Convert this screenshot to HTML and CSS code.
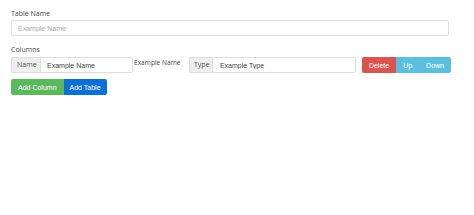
FILE: index.html
```html
<!DOCTYPE html>
<html lang="en">
<head>
    <meta charset="UTF-8">
    <meta name="viewport" content="width=device-width, initial-scale=1.0">
    <title>Table Builder</title>
    <link rel="stylesheet" href="styles.css">
</head>
<body>
    <div class="container">
        <label class="label">Table Name</label>
        <input type="text" class="field full" placeholder="Example Name">

        <label class="label columns-label">Columns</label>
        <div class="column-row">
            <div class="input-group name-group">
                <span class="addon">Name</span>
                <input type="text" class="field" value="Example Name">
            </div>
            <span class="preview">Example Name</span>
            <div class="input-group type-group">
                <span class="addon">Type</span>
                <input type="text" class="field" value="Example Type">
            </div>
            <div class="btn-group">
                <button class="btn delete">Delete</button>
                <button class="btn move">Up</button>
                <button class="btn move">Down</button>
            </div>
        </div>

        <div class="btn-group actions">
            <button class="btn add-column">Add Column</button>
            <button class="btn add-table">Add Table</button>
        </div>
    </div>
</body>
</html>
```

FILE: styles.css
```css
body {
    margin: 0;
    background: #fff;
    font-family: "Liberation Sans", Arial, sans-serif;
    font-size: 7px;
    color: #555;
}
.container {
    padding: 8px 23px 0 11px;
    width: 440px;
}
.label {
    display: block;
    font-family: "Open Sans", sans-serif;
    font-size: 7px;
    color: #444;
    height: 11px;
    line-height: 11px;
}
.columns-label {
    margin-top: 8px;
}
.field {
    box-sizing: border-box;
    height: 16px;
    border: 1px solid #ddd;
    border-radius: 2px;
    padding: 0 6px;
    font-family: "Liberation Sans", Arial, sans-serif;
    font-size: 7px;
    color: #444;
    outline: none;
}
.field::placeholder {
    color: #aaa;
}
.full {
    display: block;
    width: 438px;
    margin-top: 1px;
}
.column-row {
    display: flex;
    align-items: flex-start;
    margin-top: 2px;
}
.input-group {
    display: flex;
}
.addon {
    box-sizing: border-box;
    height: 16px;
    line-height: 14px;
    padding: 0 5px;
    background: #eee;
    border: 1px solid #ddd;
    border-right: none;
    border-radius: 2px 0 0 2px;
    color: #555;
    font-family: "Open Sans", sans-serif;
    font-size: 7px;
}
.input-group .field {
    border-radius: 0 2px 2px 0;
}
.name-group .addon {
    width: 29px;
}
.name-group .field {
    width: 93px;
}
.preview {
    font-family: "Open Sans", sans-serif;
    font-size: 6.6px;
    color: #444;
    margin-left: 1px;
    margin-top: 1px;
    width: 56px;
}
.type-group .addon {
    width: 23px;
    padding: 0 4px;
}
.type-group .field {
    width: 144px;
    padding: 0 7px;
}
.btn-group {
    display: flex;
    margin-left: 6px;
}
.btn {
    height: 16px;
    padding: 0 7px;
    border: none;
    color: #fff;
    font-family: "Liberation Sans", Arial, sans-serif;
    font-size: 7px;
    cursor: pointer;
}
.btn-group .btn:first-child {
    border-radius: 2px 0 0 2px;
}
.btn-group .btn:last-child {
    border-radius: 0 2px 2px 0;
}
.delete {
    background: #d9534f;
}
.move {
    background: #5bc0de;
}
.actions {
    margin: 6px 0 0 0;
}
.add-column {
    background: #5cb85c;
}
.add-table {
    background: #0b6fd6;
    padding: 0 6px;
}
```
